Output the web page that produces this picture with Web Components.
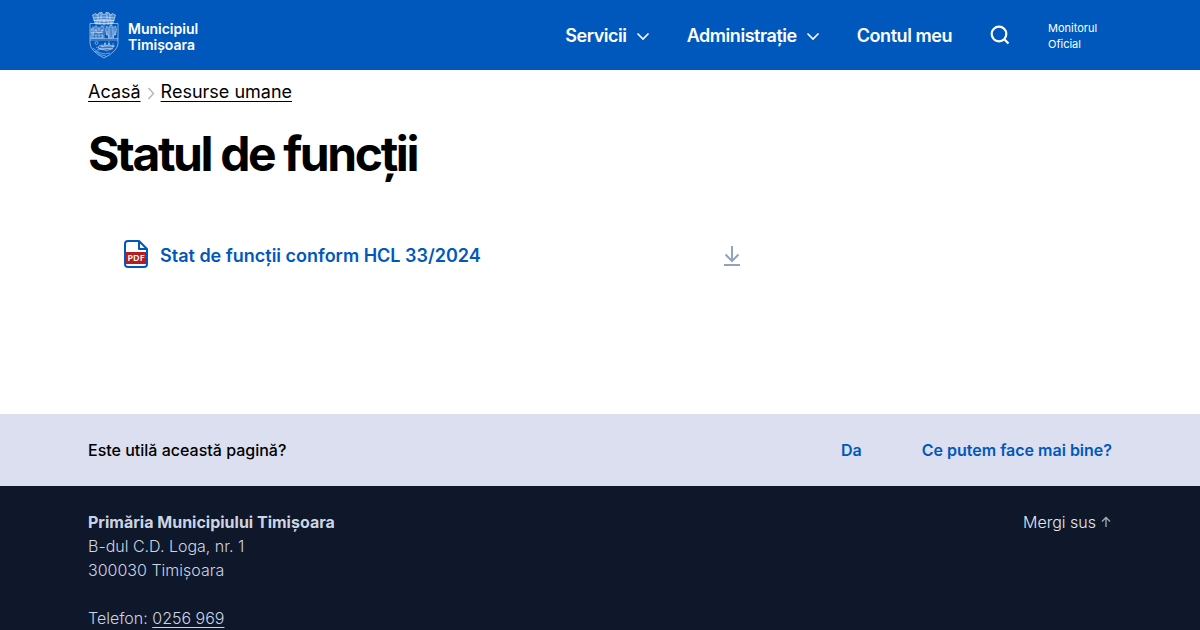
<!DOCTYPE html>
<html lang="ro">
<head>
<meta charset="utf-8">
<meta name="viewport" content="width=device-width, initial-scale=1">
<title>Statul de funcții</title>
<style>
  :root { --blue: #0058bc; --gutter: 24px; --content: 1024px; }
  body { margin: 0; background: #fff; color: #000; font-family: Inter, "Open Sans", sans-serif; font-size: 16px; line-height: 24px; }
</style>
</head>
<body>
<site-header>
  <nav-link href="#servicii" menu>Servicii</nav-link>
  <nav-link href="#administratie" menu>Administrație</nav-link>
  <nav-link href="#cont">Contul meu</nav-link>
</site-header>
<page-content>
  <bread-crumbs slot="crumbs"></bread-crumbs>
  <span slot="title">Statul de funcții</span>
  <document-link href="#document">Stat de funcții conform HCL 33/2024</document-link>
</page-content>
<feedback-bar>Este utilă această pagină?</feedback-bar>
<site-footer></site-footer>

<template id="t-wrap">
  <style>
    :host { display: block; box-sizing: border-box; max-width: calc(var(--content) + 2 * var(--gutter)); margin: 0 auto; padding: 0 var(--gutter); }
  </style>
  <slot></slot>
</template>

<template id="t-crest">
  <style>
    :host { display: block; flex: none; }
    svg { display: block; }
  </style>
  <svg width="32" height="48" viewBox="0 0 32 48" fill="none" stroke="#fff" stroke-width=".7" stroke-linejoin="round" aria-hidden="true">
    <g stroke-opacity=".7">
      <path fill="#fff" fill-opacity=".3" d="M4.500 3 8 1.500l1 2L11 .8l3-.5.500 2h3L18 .3l3 .5 2 2.700 1-2 3.500 1.500L26 8.500H6z"/>
      <path fill="#fff" fill-opacity=".2" d="M6 8.500q10-2 20 0L24.500 12h-17z"/>
      <path d="M5.500 6q10.500-2 21 0M10 2v6M13 1v6M19 1v6M22 2v6M9 9v3M12 8.500v4M16 8.500v4M20 8.500v4M23 9v3M7 10.500q9-2 18 0"/>
    </g>
    <path stroke-opacity=".75" d="M2 11.500h28V31q0 8-14 15Q2 39 2 31z"/>
    <g stroke-opacity=".6">
      <path d="M16 12v14.500M2 26.500h28M2 28h28"/>
      <path fill="#fff" fill-opacity=".15" d="M4 16h3v-2h2v2h4v-2h2v5h-2v2H9v-2H6v3H3v-5zM3 23h12v3H3z"/>
      <path d="M3 18h12M3 20.500h12M5 14v12M8 16v10M11 15v11M14 18v8"/>
      <path fill="#fff" fill-opacity=".3" d="M22 13h2l.5 3 3-2 1 4-1 5h-2v3h-5v-3h-2l-1-5 1-4 3 2z"/>
      <path d="M21 17v8M25 17v8M19 19v4M27 19v4"/>
      <circle cx="8.500" cy="31" r="1.500"/>
      <path d="M17 30v5M21 29v5M25 31v4M14 32v3M13 34h14M8 35q4 3 8 2t9 0M9 38q4-2 7 0t7-1M5 36q8 8 17 5M7 39q6 5 11 5"/>
      <path fill="#fff" fill-opacity=".2" d="M10 35l2-2 3 2 2-4 2 3 2-3 2 3h3l-2 3H12z"/>
    </g>
  </svg>
</template>

<template id="t-header">
  <style>
    :host { display: block; background: var(--blue); color: #fff; }
    .row { display: flex; align-items: center; justify-content: space-between; min-height: 70px; }
    .brand { display: flex; align-items: center; gap: 8px; padding-top: 2px; color: inherit; text-decoration: none; font-size: 14px; line-height: 16px; font-weight: 600; }
    .brand span { padding-top: 2px; }
    nav { display: flex; align-items: center; gap: 36px; }
    button { display: block; border: 0; padding: 0; background: none; color: inherit; cursor: pointer; }
    svg { display: block; }
    .monitor { width: 64px; padding-top: 2px; color: inherit; text-decoration: none; font-size: 11px; line-height: 16px; }
  </style>
  <page-wrap>
    <div class="row">
      <a class="brand" href="#acasa"><city-crest></city-crest><span>Municipiul<br>Timișoara</span></a>
      <nav>
        <slot></slot>
        <button type="button" aria-label="Caută">
          <svg width="24" height="24" viewBox="0 0 24 24" fill="none" stroke="currentColor" stroke-width="2.200"><circle cx="11" cy="11" r="7.300"/><path d="M16 16l4.500 4.500"/></svg>
        </button>
        <a class="monitor" href="#monitor">Monitorul<br>Oficial</a>
      </nav>
    </div>
  </page-wrap>
</template>

<template id="t-nav">
  <style>
    :host { display: block; }
    a { display: flex; align-items: center; gap: 8px; padding-top: 2px; color: inherit; text-decoration: none; font-size: 18px; line-height: 28px; font-weight: 600; letter-spacing: -0.025em; }
    svg { display: none; }
    :host([menu]) svg { display: block; }
  </style>
  <a><slot></slot><svg width="16" height="16" viewBox="0 0 16 16" fill="none" stroke="currentColor" stroke-width="1.600" aria-hidden="true"><path d="M2.500 5.500 8 11l5.500-5.500"/></svg></a>
</template>

<template id="t-crumbs">
  <style>
    :host { display: block; }
    nav { display: flex; align-items: center; font-size: 18px; line-height: 28px; }
    a { color: inherit; text-decoration: underline 1px; text-underline-offset: 3px; }
    svg { display: block; }
  </style>
  <nav aria-label="Navigare">
    <a href="#acasa">Acasă</a>
    <svg width="20" height="20" viewBox="0 0 20 20" fill="none" stroke="#b5b5b5" stroke-width="1.400" aria-hidden="true"><path d="M7.500 6l5 5.500-5 5.500"/></svg>
    <a href="#resurse">Resurse umane</a>
  </nav>
</template>

<template id="t-content">
  <style>
    :host { display: block; }
    main { padding: 8px 0 140px; }
    h1 { margin: 24px 0 60px; font-size: 48px; line-height: 48px; font-weight: 700; letter-spacing: -0.05em; }
    .docs { max-width: 656px; }
  </style>
  <page-wrap>
    <main>
      <slot name="crumbs"></slot>
      <h1><slot name="title"></slot></h1>
      <div class="docs"><slot></slot></div>
    </main>
  </page-wrap>
</template>

<template id="t-doc">
  <style>
    :host { display: block; padding-left: 32px; }
    a { display: flex; align-items: center; gap: 8px; color: var(--blue); text-decoration: none; font-size: 18px; line-height: 36px; font-weight: 600; }
    svg { display: block; flex: none; }
    .file { align-self: flex-start; }
    .name { flex: 1; }
    .pdf { font: 600 9px/9px "Noto Sans", sans-serif; }
  </style>
  <a>
    <svg class="file" width="32" height="32" viewBox="0 0 32 32" aria-hidden="true">
      <path fill="none" stroke="currentColor" stroke-width="2" stroke-linejoin="round" d="M19 3H8q-3 0-3 3v20q0 3 3 3h16q3 0 3-3V11zM19 3v8h8"/>
      <path fill="#b91c1c" d="M6 14h20v12H6z"/>
      <text class="pdf" x="16" y="23" text-anchor="middle" fill="#fff">PDF</text>
    </svg>
    <span class="name"><slot></slot></span>
    <svg width="24" height="24" viewBox="0 0 24 24" fill="none" stroke="#94a3b8" stroke-width="2" aria-hidden="true"><path d="M12 2v15M5.500 10.500 12 17l6.500-6.500M4 21h16"/></svg>
  </a>
</template>

<template id="t-feedback">
  <style>
    :host { display: block; background: #dbdfef; }
    .row { display: flex; align-items: center; padding: 24px 0; font-weight: 500; }
    .actions { display: flex; gap: 60px; margin-left: auto; }
    button { border: 0; padding: 0; background: none; color: var(--blue); font: inherit; font-weight: 600; cursor: pointer; }
  </style>
  <page-wrap>
    <div class="row">
      <span><slot></slot></span>
      <div class="actions"><button type="button">Da</button><button type="button">Ce putem face mai bine?</button></div>
    </div>
  </page-wrap>
</template>

<template id="t-footer">
  <style>
    :host { display: block; background: #0f172a; color: #cbd5e1; font-weight: 300; }
    footer { display: flex; justify-content: space-between; align-items: flex-start; padding: 24px 0; }
    address { font-style: normal; }
    p { margin: 0 0 24px; }
    strong { font-weight: 700; }
    a { color: inherit; }
    .phone { text-decoration: underline 1px; text-underline-offset: 3px; }
    .top { display: flex; align-items: center; gap: 4px; color: #e2e8f0; text-decoration: none; }
    svg { display: block; }
  </style>
  <page-wrap>
    <footer>
      <address>
        <p><strong>Primăria Municipiului Timișoara</strong><br>B-dul C.D. Loga, nr. 1<br>300030 Timișoara</p>
        <p>Telefon: <a class="phone" href="tel:0256969">0256 969</a></p>
      </address>
      <a class="top" href="#top">Mergi sus <svg width="12" height="12" viewBox="0 0 12 12" fill="none" stroke="#a3b0ae" stroke-width="1.300" aria-hidden="true"><path d="M6 11V1.500M2 5.500l4-4 4 4"/></svg></a>
    </footer>
  </page-wrap>
</template>

<script>
  class TemplateElement extends HTMLElement {
    constructor() {
      super();
      const template = document.getElementById(this.constructor.template);
      this.attachShadow({ mode: 'open' }).append(template.content.cloneNode(true));
    }
  }
  class LinkElement extends TemplateElement {
    connectedCallback() {
      this.shadowRoot.querySelector('a').href = this.getAttribute('href') || '#';
    }
  }
  customElements.define('page-wrap', class extends TemplateElement { static template = 't-wrap'; });
  customElements.define('city-crest', class extends TemplateElement { static template = 't-crest'; });
  customElements.define('nav-link', class extends LinkElement { static template = 't-nav'; });
  customElements.define('site-header', class extends TemplateElement { static template = 't-header'; });
  customElements.define('bread-crumbs', class extends TemplateElement { static template = 't-crumbs'; });
  customElements.define('document-link', class extends LinkElement { static template = 't-doc'; });
  customElements.define('page-content', class extends TemplateElement { static template = 't-content'; });
  customElements.define('feedback-bar', class extends TemplateElement { static template = 't-feedback'; });
  customElements.define('site-footer', class extends TemplateElement { static template = 't-footer'; });
</script>
</body>
</html>
